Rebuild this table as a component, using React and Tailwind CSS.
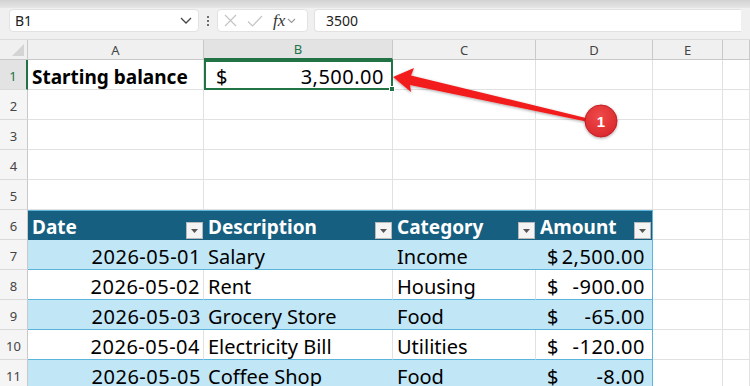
import React from 'react'

const COLS = [176, 189, 143, 117, 70, 27]
const LETTERS = ['A', 'B', 'C', 'D', 'E', '']

const rows = [
  { date: '2026-05-01', desc: 'Salary', cat: 'Income', amt: '2,500.00' },
  { date: '2026-05-02', desc: 'Rent', cat: 'Housing', amt: '-900.00' },
  { date: '2026-05-03', desc: 'Grocery Store', cat: 'Food', amt: '-65.00' },
  { date: '2026-05-04', desc: 'Electricity Bill', cat: 'Utilities', amt: '-120.00' },
  { date: '2026-05-05', desc: 'Coffee Shop', cat: 'Food', amt: '-8.00' },
]

const font = { fontFamily: '"Noto Sans", "Liberation Sans", sans-serif' }

const FilterBtn = () => (
  <div className='w-[17px] h-[17px] shrink-0 bg-[#f4f4f4] border border-[#b9b9b9] flex items-center justify-center'>
    <svg width='7' height='4' viewBox='0 0 7 4'>
      <path d='M0 0 L7 0 L3.5 4 Z' fill='#555' />
    </svg>
  </div>
)

const RowHead = ({ n, active }) => (
  <div
    className={`w-[28px] shrink-0 flex items-end justify-center pb-[3px] text-[13px] border-b border-[#dadada] ${
      active ? 'bg-[#e3e3e3] text-[#217346] border-r-2 border-r-[#217346]' : 'bg-[#f5f5f5] text-[#444] border-r border-r-[#c9c9c9]'
    }`}
  >
    {n}
  </div>
)

const Blank = ({ w, cls = '' }) => (
  <div style={{ width: w }} className={`shrink-0 border-r border-b border-[#e1e1e1] ${cls}`} />
)

const App = () => {
  return (
    <div style={font} className='relative w-[750px] h-[386px] overflow-hidden bg-white text-black'>
      {/* top strip */}
      <div className='h-[8px] bg-gradient-to-b from-[#d2d2d2] to-[#e6e6e6]' />

      {/* formula bar */}
      <div className='h-[32px] bg-[#f0f0f0] flex items-start pt-[1px] px-[9px] gap-[6px] border-b border-[#dcdcdc]'>
        <div className='w-[190px] h-[23px] bg-white rounded-[4px] border border-[#e2e2e2] flex items-center justify-between pl-[5px] pr-[6px] text-[14px] text-[#222]'>
          <span>B1</span>
          <svg width='12' height='7' viewBox='0 0 12 7'>
            <path d='M1 1 L6 6 L11 1' stroke='#444' strokeWidth='1.3' fill='none' />
          </svg>
        </div>
        <div className='w-[6px] h-[23px] flex flex-col items-center justify-center gap-[2px]'>
          <span className='w-[2px] h-[2px] bg-[#444] rounded-full' />
          <span className='w-[2px] h-[2px] bg-[#444] rounded-full' />
          <span className='w-[2px] h-[2px] bg-[#444] rounded-full' />
        </div>
        <div className='w-[91px] h-[23px] bg-white rounded-[4px] border border-[#e2e2e2] flex items-center pl-[6px] gap-[10px]'>
          <svg width='13' height='13' viewBox='0 0 13 13'>
            <path d='M1 1 L12 12 M12 1 L1 12' stroke='#c4c4c4' strokeWidth='1.2' />
          </svg>
          <svg width='16' height='12' viewBox='0 0 16 12'>
            <path d='M1 6.5 L5.5 11 L15 1' stroke='#c4c4c4' strokeWidth='1.2' fill='none' />
          </svg>
          <div className='flex items-center gap-[2px]'>
            <span className='text-[17px] leading-none text-[#333]' style={{ fontFamily: '"Liberation Serif", serif' }}>
              <i>fx</i>
            </span>
            <svg width='9' height='6' viewBox='0 0 9 6'>
              <path d='M1 1 L4.5 4.5 L8 1' stroke='#999' strokeWidth='1.1' fill='none' />
            </svg>
          </div>
        </div>
        <div className='flex-1 h-[23px] bg-white rounded-l-[4px] border border-r-0 border-[#e2e2e2] flex items-center pl-[11px] text-[14px] text-[#222]'>
          3500
        </div>
      </div>

      {/* column headers */}
      <div className='flex h-[20px] bg-[#f0f0f0]'>
        <div className='w-[28px] shrink-0 relative border-r border-b border-[#c9c9c9]'>
          <svg className='absolute right-[3px] bottom-[3px]' width='12' height='12' viewBox='0 0 12 12'>
            <path d='M12 0 L12 12 L0 12 Z' fill='#d4d4d4' />
          </svg>
        </div>
        {COLS.map((w, i) => (
          <div
            key={i}
            style={{ width: w }}
            className={`shrink-0 flex items-center justify-center pt-[2px] text-[13px] ${
              i === 1
                ? 'bg-[#e3e3e3] text-[#217346] border-b-2 border-b-[#217346] border-r border-r-[#c9c9c9]'
                : 'text-[#444] border-r border-b border-[#c9c9c9]'
            }`}
          >
            {LETTERS[i]}
          </div>
        ))}
      </div>

      {/* row 1 */}
      <div className='flex h-[30px]'>
        <RowHead n={1} active />
        <div style={{ width: COLS[0] }} className='shrink-0 border-r border-b border-[#e1e1e1] flex items-center pt-[6px] pl-[4px] text-[19px] font-bold'>
          Starting balance
        </div>
        <div style={{ width: COLS[1] }} className='shrink-0 relative border-2 border-[#217346] flex items-center justify-between pt-[4px] pl-[10px] pr-[7px] text-[20px]'>
          <span>$</span>
          <span className='tracking-[0.5px]'>3,500.00</span>
          <div className='absolute right-[-4px] bottom-[-4px] w-[6px] h-[6px] bg-[#217346] border border-white' />
        </div>
        {COLS.slice(2).map((w, i) => (
          <Blank key={i} w={w} />
        ))}
      </div>

      {/* rows 2-5 */}
      {[2, 3, 4, 5].map((n) => (
        <div key={n} className='flex h-[30px]'>
          <RowHead n={n} />
          {COLS.map((w, i) => (
            <Blank key={i} w={w} />
          ))}
        </div>
      ))}

      {/* row 6 table header */}
      <div className='flex h-[30px]'>
        <RowHead n={6} />
        {['Date', 'Description', 'Category', 'Amount'].map((h, i) => (
          <div
            key={h}
            style={{ width: COLS[i] }}
            className={`shrink-0 bg-[#175f80] border-t border-[#5ab4dc] flex items-end justify-between pl-[4px] pr-[1px] pb-[1px] ${
              i === 3 ? 'border-r border-r-[#5ab4dc]' : ''
            }`}
          >
            <span className='text-white font-bold text-[19px] leading-[27px] self-center pt-[4px]'>{h}</span>
            <FilterBtn />
          </div>
        ))}
        <Blank w={COLS[4]} />
        <Blank w={COLS[5]} />
      </div>

      {/* table rows */}
      {rows.map((r, idx) => {
        const band = idx % 2 === 0
        const cell = band
          ? 'bg-[#c1e6f6] border-b border-[#5ab4dc]'
          : 'bg-white border-b border-[#5ab4dc] border-r border-r-[#e1e1e1]'
        return (
          <div key={r.date} className='flex h-[30px]'>
            <RowHead n={7 + idx} />
            <div style={{ width: COLS[0] }} className={`shrink-0 flex items-center justify-end pt-[4px] pr-[3px] text-[20px] tracking-[0.5px] ${cell}`}>
              {r.date}
            </div>
            <div style={{ width: COLS[1] }} className={`shrink-0 flex items-center pt-[4px] pl-[4px] text-[20px] ${cell}`}>
              {r.desc}
            </div>
            <div style={{ width: COLS[2] }} className={`shrink-0 flex items-center pt-[4px] pl-[4px] text-[20px] ${cell}`}>
              {r.cat}
            </div>
            <div
              style={{ width: COLS[3] }}
              className={`shrink-0 flex items-center justify-between pt-[4px] pl-[11px] pr-[7px] text-[20px] border-r border-r-[#5ab4dc] ${
                band ? 'bg-[#c1e6f6] border-b border-b-[#5ab4dc]' : 'bg-white border-b border-b-[#5ab4dc]'
              }`}
            >
              <span>$</span>
              <span className='tracking-[0.5px]'>{r.amt}</span>
            </div>
            <Blank w={COLS[4]} />
            <Blank w={COLS[5]} />
          </div>
        )
      })}

      {/* callout arrow + badge */}
      <svg className='absolute left-0 top-0 pointer-events-none' width='750' height='386' viewBox='0 0 750 386'>
        <defs>
          <filter id='sh' x='-50%' y='-50%' width='200%' height='200%'>
            <feDropShadow dx='0' dy='1' stdDeviation='1.5' floodColor='#000' floodOpacity='0.35' />
          </filter>
          <radialGradient id='bd' cx='45%' cy='35%' r='70%'>
            <stop offset='0%' stopColor='#ef4a4a' />
            <stop offset='100%' stopColor='#d9262b' />
          </radialGradient>
        </defs>
        <path
          d='M393 77 L414 68 L411 75.5 L592 119.5 L591 122.5 L410 85 L411 92 Z'
          fill='#f21c1c'
          filter='url(#sh)'
        />
        <circle cx='601' cy='121' r='16' fill='url(#bd)' stroke='#c21f24' strokeWidth='1' filter='url(#sh)' />
        <text x='601' y='126.5' textAnchor='middle' fill='#fff' fontSize='15' fontWeight='700' fontFamily='Liberation Sans, sans-serif'>
          1
        </text>
      </svg>
    </div>
  )
}

export default App
